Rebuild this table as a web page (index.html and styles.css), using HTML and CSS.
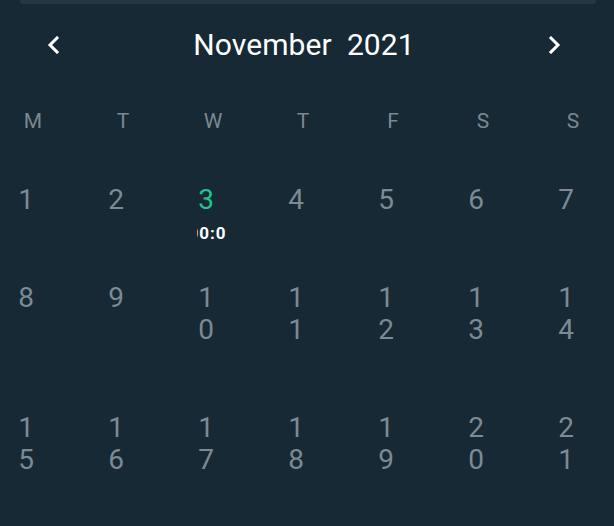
FILE: index.html
```html
<!DOCTYPE html>
<html lang="en">
<head>
<meta charset="utf-8">
<title>Calendar</title>
<link rel="stylesheet" href="styles.css">
</head>
<body>
<div class="page">
  <div class="top-strip"></div>
  <header class="month-bar">
    <button class="nav-btn" aria-label="Previous month">
      <svg width="14" height="18" viewBox="0 0 14 18"><path d="M11 2 L4 9 L11 16" fill="none" stroke="#fff" stroke-width="3" stroke-linecap="square"/></svg>
    </button>
    <div class="month-title">November&nbsp; 2021</div>
    <button class="nav-btn" aria-label="Next month">
      <svg width="14" height="18" viewBox="0 0 14 18"><path d="M3 2 L10 9 L3 16" fill="none" stroke="#fff" stroke-width="3" stroke-linecap="square"/></svg>
    </button>
  </header>
  <div class="grid-wrap">
    <div class="weekdays">
      <div class="wd">M</div><div class="wd">T</div><div class="wd">W</div><div class="wd">T</div><div class="wd">F</div><div class="wd">S</div><div class="wd">S</div>
    </div>
    <div class="days">
      <div class="day"><span class="num">1</span></div>
      <div class="day"><span class="num">2</span></div>
      <div class="day"><span class="num today">3</span><span class="time"><span class="time-text">00:00</span></span></div>
      <div class="day"><span class="num">4</span></div>
      <div class="day"><span class="num">5</span></div>
      <div class="day"><span class="num">6</span></div>
      <div class="day"><span class="num">7</span></div>
      <div class="day"><span class="num">8</span></div>
      <div class="day"><span class="num">9</span></div>
      <div class="day"><span class="num">10</span></div>
      <div class="day"><span class="num">11</span></div>
      <div class="day"><span class="num">12</span></div>
      <div class="day"><span class="num">13</span></div>
      <div class="day"><span class="num">14</span></div>
      <div class="day"><span class="num">15</span></div>
      <div class="day"><span class="num">16</span></div>
      <div class="day"><span class="num">17</span></div>
      <div class="day"><span class="num">18</span></div>
      <div class="day"><span class="num">19</span></div>
      <div class="day"><span class="num">20</span></div>
      <div class="day"><span class="num">21</span></div>
    </div>
  </div>
</div>
</body>
</html>
```
FILE: styles.css
```css
html, body {
  margin: 0;
  padding: 0;
  background: #162935;
  overflow: hidden;
}
body {
  width: 614px;
  height: 526px;
  font-family: Roboto, "Liberation Sans", sans-serif;
}
.page {
  width: 614px;
  height: 526px;
  overflow: hidden;
  background: #162935;
}
.top-strip {
  height: 4px;
  margin: 0 18px 0 20px;
  background: #243843;
  border-radius: 0 0 14px 14px;
}
.month-bar {
  height: 82px;
  display: flex;
  align-items: center;
  justify-content: space-between;
  padding: 0 52px 0 46px;
}
.nav-btn {
  background: none;
  border: 0;
  padding: 0;
  width: 14px;
  height: 18px;
  display: flex;
}
.month-title {
  color: #ffffff;
  font-size: 30px;
  line-height: 36px;
  letter-spacing: 0.1px;
}
.grid-wrap {
  margin-left: -12px;
  width: 630px;
  padding-top: 23px;
}
.weekdays {
  display: grid;
  grid-template-columns: repeat(7, 90px);
}
.wd {
  text-align: center;
  color: #7b8891;
  font-size: 21px;
  line-height: 24px;
}
.days {
  margin-top: 51px;
  display: grid;
  grid-template-columns: repeat(7, 90px);
  row-gap: 66px;
}
.day {
  position: relative;
}
.num {
  display: block;
  margin-left: 30px;
  width: 16px;
  text-align: center;
  word-break: break-all;
  color: #7d8a93;
  font-size: 28px;
  line-height: 32px;
}
.num.today {
  color: #22c38e;
}
.time {
  position: absolute;
  left: 29px;
  top: 40px;
  width: 29px;
  height: 18px;
  overflow: hidden;
  white-space: nowrap;
}
.time-text {
  display: block;
  margin-left: -8.5px;
  color: #ffffff;
  font-weight: 700;
  font-size: 17px;
  line-height: 18px;
  letter-spacing: 1px;
}
```
